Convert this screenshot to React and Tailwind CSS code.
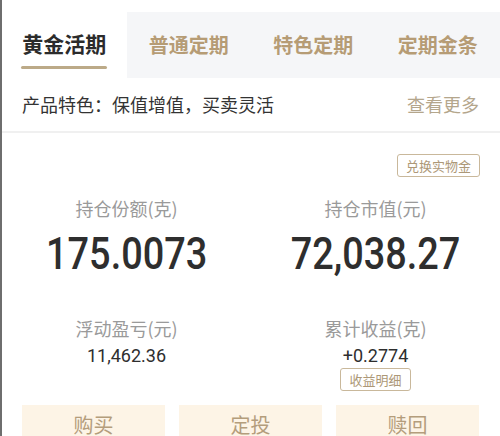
import React from "react";

const tabs = ["黄金活期", "普通定期", "特色定期", "定期金条"];

function Tab({ label, active }) {
  if (active) {
    return (
      <div className="flex-1 h-[66px] bg-white flex flex-col items-center pt-[20px]">
        <span className="text-[21px] leading-[22px] font-bold text-[#2b2b2b]">{label}</span>
        <span className="mt-[12px] h-[3px] w-[86px] bg-[#bcaa88] rounded-full" />
      </div>
    );
  }
  return (
    <div className="flex-1 h-[66px] bg-[#f5f6f8] flex justify-center pt-[22px]">
      <span className="text-[20px] leading-[22px] font-bold text-[#b69c75]">{label}</span>
    </div>
  );
}

function Tag({ children }) {
  return (
    <span className="inline-flex items-center justify-center h-[23px] px-[8px] border border-[#c9b89b] rounded-[3px] text-[13px] text-[#ad9877] leading-none">
      {children}
    </span>
  );
}

function BigStat({ label, value }) {
  return (
    <div className="flex flex-col items-center">
      <span className="text-[18px] leading-[24px] text-[#9a9a9a]">{label}</span>
      <span className="mt-[10px] h-[48px] flex items-center">
        <span className="inline-block text-[44px] leading-[48px] font-medium text-[#2e2e2e] scale-x-[0.86]" style={{ fontFamily: "Roboto, sans-serif" }}>
          {value}
        </span>
      </span>
    </div>
  );
}

function SmallStat({ label, value, children }) {
  return (
    <div className="flex flex-col items-center">
      <span className="text-[18px] leading-[24px] text-[#9a9a9a]">{label}</span>
      <span className="mt-[4px] text-[18px] leading-[24px] text-[#2e2e2e]" style={{ fontFamily: "Roboto, sans-serif" }}>
        {value}
      </span>
      {children}
    </div>
  );
}

export default function App() {
  return (
    <div
      className="w-[500px] h-[436px] overflow-hidden bg-white border-l-2 border-[#6e6e6e]"
      style={{ fontFamily: '"Noto Sans CJK SC", "Noto Sans", sans-serif' }}
    >
      <div className="pt-[12px] flex">
        {tabs.map((t, i) => (
          <Tab key={t} label={t} active={i === 0} />
        ))}
      </div>

      <div className="h-[53px] flex items-center justify-between pl-[20px] pr-[21px]">
        <span className="text-[18px] text-[#333]">产品特色：保值增值，买卖灵活</span>
        <span className="text-[18px] text-[#b4a68c]">查看更多</span>
      </div>
      <div className="h-[2px] bg-[#f0f0f0]" />

      <div className="pt-[21px] pr-[20px] flex justify-end">
        <Tag>兑换实物金</Tag>
      </div>

      <div className="mt-[19px] grid grid-cols-2">
        <BigStat label="持仓份额(克)" value="175.0073" />
        <BigStat label="持仓市值(元)" value="72,038.27" />
      </div>

      <div className="mt-[38px] grid grid-cols-2">
        <SmallStat label="浮动盈亏(元)" value="11,462.36" />
        <SmallStat label="累计收益(克)" value="+0.2774">
          <Tag>收益明细</Tag>
        </SmallStat>
      </div>

      <div className="mt-[14px] pl-[20px] pr-[21px] grid grid-cols-3 gap-[14px]">
        {["购买", "定投", "赎回"].map((b) => (
          <div key={b} className="h-[40px] bg-[#fdf4e6] flex items-center justify-center text-[20px] text-[#b49d7c]">
            {b}
          </div>
        ))}
      </div>
    </div>
  );
}
